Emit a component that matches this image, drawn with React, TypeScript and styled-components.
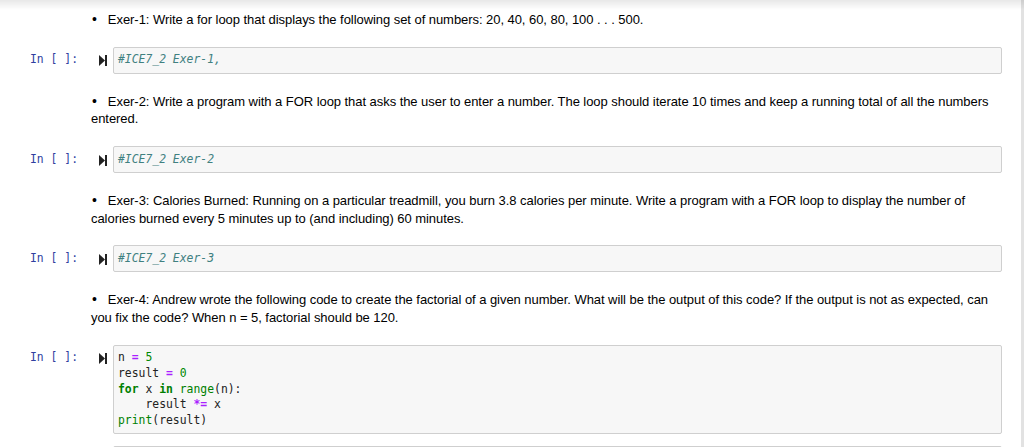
import React from "react";
import styled, { createGlobalStyle } from "styled-components";

const GlobalStyle = createGlobalStyle`
  html, body {
    margin: 0;
    padding: 0;
    background: #fff;
    overflow: hidden;
  }
  body {
    font-family: "Liberation Sans", Arial, sans-serif;
  }
`;

const TopShadow = styled.div`
  position: fixed;
  top: 0;
  left: 0;
  right: 0;
  height: 10px;
  background: linear-gradient(to bottom, rgba(0, 0, 0, 0.09), rgba(0, 0, 0, 0));
  pointer-events: none;
`;

const Notebook = styled.div`
  width: 1021px;
  border-right: 3px solid #e2e2e2;
  min-height: 447px;
  background: #fff;
`;

const MarkdownCell = styled.div<{ $first?: boolean }>`
  padding: ${(p) => (p.$first ? "11px" : "13px")} 19px 12px 91px;
  font-size: 13px;
  letter-spacing: -0.055px;
  line-height: 17.75px;
  color: #000;
`;

const Bullet = styled.span`
  margin-left: 1px;
  margin-right: 11px;
  font-size: 14px;
  line-height: 1;
`;

const CodeCell = styled.div`
  display: flex;
  padding: 6px 19px 6px 0;
`;

const PromptArea = styled.div`
  width: 113px;
  flex: none;
  display: flex;
  align-items: flex-start;
  padding-top: 5.5px;
`;

const Prompt = styled.span`
  width: 78px;
  text-align: right;
  font-family: "DejaVu Sans Mono", "Liberation Mono", monospace;
  font-size: 11.4px;
  line-height: 15.75px;
  color: #303f9f;
  white-space: pre;
`;

const RunIcon = styled.svg`
  margin-left: 21px;
  margin-top: 3px;
  flex: none;
`;

const InputArea = styled.pre`
  flex: 1;
  margin: 0;
  padding: 4.5px 4px;
  background: #f7f7f7;
  border: 1px solid #cfcfcf;
  border-radius: 2px;
  font-family: "DejaVu Sans Mono", "Liberation Mono", monospace;
  font-size: 11.4px;
  line-height: 15.75px;
  color: #222;
  min-height: 15.75px;
`;

const Comment = styled.span`
  color: #408080;
  font-style: italic;
`;

const Op = styled.span`
  color: #aa22ff;
  font-weight: bold;
`;

const Num = styled.span`
  color: #008800;
`;

const Keyword = styled.span<{ $bold?: boolean }>`
  color: #008000;
  font-weight: ${(p) => (p.$bold ? "bold" : "normal")};
`;

const StepIcon = () => (
  <RunIcon width="8" height="11" viewBox="0 0 8 11">
    <polygon points="0,0 6,5.5 0,11" fill="#222" />
    <rect x="6" y="0" width="2" height="11" fill="#222" />
  </RunIcon>
);

const Code: React.FC<{ children?: React.ReactNode }> = ({ children }) => (
  <CodeCell>
    <PromptArea>
      <Prompt>In [ ]:</Prompt>
      <StepIcon />
    </PromptArea>
    <InputArea>{children}</InputArea>
  </CodeCell>
);

const Markdown: React.FC<{ first?: boolean; children: React.ReactNode }> = ({
  first,
  children,
}) => (
  <MarkdownCell $first={first}>
    <Bullet>•</Bullet>
    {children}
  </MarkdownCell>
);

const App: React.FC = () => (
  <>
    <GlobalStyle />
    <Notebook>
      <Markdown first>
        Exer-1: Write a for loop that displays the following set of numbers: 20, 40, 60, 80,
        100 . . . 500.
      </Markdown>
      <Code>
        <Comment>#ICE7_2 Exer-1,</Comment>
      </Code>
      <Markdown>
        Exer-2: Write a program with a FOR loop that asks the user to enter a number. The loop
        should iterate 10 times and keep a running total of all the numbers entered.
      </Markdown>
      <Code>
        <Comment>#ICE7_2 Exer-2</Comment>
      </Code>
      <Markdown>
        Exer-3: Calories Burned: Running on a particular treadmill, you burn 3.8 calories per
        minute. Write a program with a FOR loop to display the number of calories burned every 5
        minutes up to (and including) 60 minutes.
      </Markdown>
      <Code>
        <Comment>#ICE7_2 Exer-3</Comment>
      </Code>
      <Markdown>
        Exer-4: Andrew wrote the following code to create the factorial of a given number. What
        will be the output of this code? If the output is not as expected, can you fix the code?
        When n = 5, factorial should be 120.
      </Markdown>
      <Code>
        n <Op>=</Op> <Num>5</Num>
        {"\n"}result <Op>=</Op> <Num>0</Num>
        {"\n"}
        <Keyword $bold>for</Keyword> x <Keyword $bold>in</Keyword> <Keyword>range</Keyword>(n):
        {"\n"}    result <Op>*=</Op> x{"\n"}
        <Keyword>print</Keyword>(result)
      </Code>
      <Code />
    </Notebook>
    <TopShadow />
  </>
);

export default App;
